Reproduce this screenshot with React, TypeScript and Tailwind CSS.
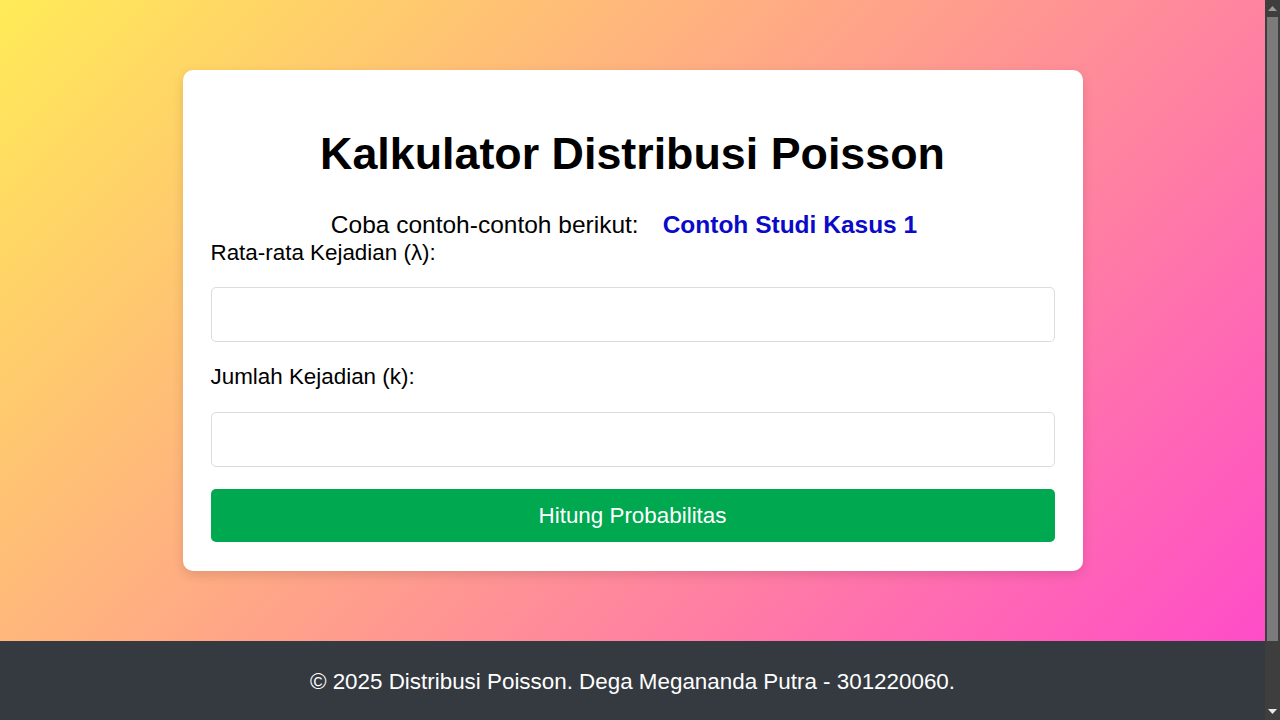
export default function App() {
  return (
    <div className="flex h-screen w-full overflow-hidden font-['Liberation_Sans',Arial,sans-serif]">
      {/* page */}
      <div className="flex flex-1 flex-col">
        <main className="h-[641px] shrink-0 bg-[linear-gradient(135deg,#ffeb57_0%,#ff9e8c_50%,#ff4cc8_100%)] pt-[70px]">
          <div className="mx-auto w-[900px] rounded-[10px] bg-white p-[28px] pb-[29px] shadow-[0_4px_12px_rgba(0,0,0,0.12)]">
            <h1 className="my-[30px] text-center text-[44.8px] font-bold leading-[1.15] text-black">
              Kalkulator Distribusi Poisson
            </h1>
            <p className="pt-[1px] pb-[1px] text-center text-[24.5px] leading-[1.15] text-black">
              Coba contoh-contoh berikut:
              <a href="#" className="ml-[24px] mr-[17px] font-bold text-[#0a0ac8]">
                Contoh Studi Kasus 1
              </a>
            </p>
            <form className="flex flex-col" onSubmit={(e) => e.preventDefault()}>
              <label className="text-[22.4px] leading-[1.15] text-black">Rata-rata Kejadian (λ):</label>
              <input
                type="text"
                className="mt-[22px] h-[55px] w-full rounded-[5px] border border-[#dcdcdc] px-3 text-[22.4px] outline-none"
              />
              <label className="mt-[22px] text-[22.4px] leading-[1.15] text-black">Jumlah Kejadian (k):</label>
              <input
                type="text"
                className="mt-[22px] h-[55px] w-full rounded-[5px] border border-[#dcdcdc] px-3 text-[22.4px] outline-none"
              />
              <button
                type="submit"
                className="mt-[22px] h-[53px] w-full rounded-[5px] bg-[#00a84f] text-[22.4px] text-white"
              >
                Hitung Probabilitas
              </button>
            </form>
          </div>
        </main>
        <footer className="flex-1 bg-[#343a40] pt-[28px] text-center text-[22.4px] leading-[1.15] text-white">
          © 2025 Distribusi Poisson. Dega Megananda Putra - 301220060.
        </footer>
      </div>

      {/* scrollbar */}
      <div className="flex w-[15px] shrink-0 flex-col bg-[#3e3e3e]">
        <div className="flex h-[17px] items-center justify-center">
          <svg width="9" height="5" viewBox="0 0 9 5">
            <path d="M0 5 L4.5 0 L9 5 Z" fill="#9a9a9a" />
          </svg>
        </div>
        <div className="flex-1 px-[2px] pb-[62px]">
          <div className="h-full w-full bg-[#7b7b7b]" />
        </div>
        <div className="flex h-[17px] items-center justify-center">
          <svg width="9" height="5" viewBox="0 0 9 5">
            <path d="M0 0 L9 0 L4.5 5 Z" fill="#e8e8e8" />
          </svg>
        </div>
      </div>
    </div>
  );
}
